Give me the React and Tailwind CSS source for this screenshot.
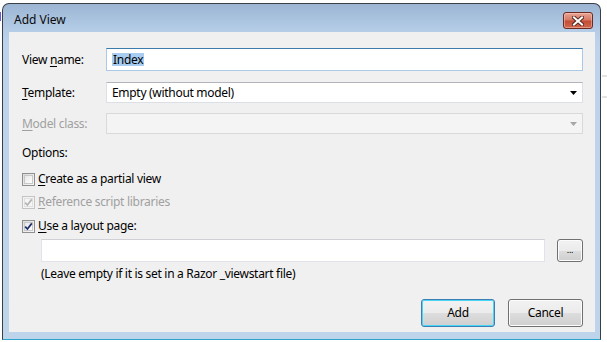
export default function App() {
  return (
    <div className="relative w-[607px] h-[342px] overflow-hidden bg-white font-['Noto_Sans',sans-serif] text-[12px] tracking-[-0.3px] text-black">
      {/* background bits outside the dialog */}
      <div className="absolute left-0 top-[12px] w-[1px] h-[9px] bg-[#6a5acd]" />
      <div className="absolute left-[602px] top-[75px] w-[5px] h-[2px] bg-[#e3e3e3]" />
      <div className="absolute left-[602px] top-[96px] w-[5px] h-[2px] bg-[#e3e3e3]" />

      {/* Window */}
      <div className="ml-[2px] mt-[3px] w-[599px] h-[337px] flex flex-col rounded-t-[7px] border border-[#3a3f47] border-b-[#2ea3cc] bg-[linear-gradient(to_bottom,#9bb5d3_0px,#b4cce6_26px,#bcd3eb_40px,#bdd4eb_100%)]">
        {/* Title bar */}
        <div className="h-[28px] shrink-0 flex items-start justify-between pl-[11px] pr-[7px] pt-[8px]">
          <span className="leading-[16px] text-[#0a0a0a] tracking-normal">Add View</span>
          <button className="w-[30px] h-[17px] flex items-center justify-center rounded-[3px] border border-[#6b2b22] bg-[linear-gradient(to_bottom,#e8a594_0%,#d77a64_45%,#c34d36_55%,#d0694d_100%)] shadow-[inset_0_0_0_1px_rgba(255,210,200,0.45)]">
            <svg width="12" height="10" viewBox="0 0 12 10">
              <path d="M2 1.5 L10 8.5 M10 1.5 L2 8.5" stroke="#5a2a22" strokeWidth="4" strokeLinecap="square" />
              <path d="M2 1.5 L10 8.5 M10 1.5 L2 8.5" stroke="#ffffff" strokeWidth="2" strokeLinecap="square" />
            </svg>
          </button>
        </div>

        {/* Client area */}
        <div className="ml-[6px] mr-[5px] h-[300px] shrink-0 bg-[#f0f0f0] flex flex-col pl-[13px] pr-[12px]">
          {/* View name */}
          <div className="mt-[16px] h-[23px] flex items-center">
            <span className="w-[84px] shrink-0">
              View <span className="underline underline-offset-2">n</span>ame:
            </span>
            <div className="flex-1 h-[23px] bg-white border border-[#a9c9e6] border-t-[#3d7bad] flex items-center pl-[5px]">
              <span className="bg-[#a8cdf1] leading-[13px] h-[13px] px-[1px]">Index</span>
            </div>
          </div>

          {/* Template */}
          <div className="mt-[11px] h-[21px] flex items-center">
            <span className="w-[84px] shrink-0">
              <span className="underline underline-offset-2">T</span>emplate:
            </span>
            <div className="flex-1 h-[21px] bg-white border border-[#dcdfe6] border-t-[#b2b5bb] flex items-center justify-between pl-[5px] pr-[5px]">
              <span>Empty (without model)</span>
              <svg width="7" height="4" viewBox="0 0 7 4">
                <path d="M0 0 H7 L3.5 4 Z" fill="#000" />
              </svg>
            </div>
          </div>

          {/* Model class */}
          <div className="mt-[10px] h-[21px] flex items-center">
            <span className="w-[84px] shrink-0 text-[#a0a0a0]">
              <span className="underline underline-offset-2">M</span>odel class:
            </span>
            <div className="flex-1 h-[21px] bg-[#f4f4f4] border border-[#d9d9d9] flex items-center justify-end pr-[5px]">
              <svg width="7" height="4" viewBox="0 0 7 4">
                <path d="M0 0 H7 L3.5 4 Z" fill="#a6a6a6" />
              </svg>
            </div>
          </div>

          {/* Options */}
          <div className="mt-[11px] h-[16px] flex items-center">Options:</div>

          <CheckRow className="mt-[10px]" label={<><span className="underline underline-offset-2">C</span>reate as a partial view</>} />
          <CheckRow className="mt-[7px]" checked disabled label={<><span className="underline underline-offset-2">R</span>eference script libraries</>} />
          <CheckRow className="mt-[8px]" checked label={<><span className="underline underline-offset-2">U</span>se a layout page:</>} />

          {/* Layout page path */}
          <div className="mt-[5px] h-[23px] flex items-center pl-[19px] gap-[12px]">
            <div className="flex-1 h-[23px] bg-white border border-[#e2e3ea] border-t-[#cfd1d7]" />
            <WinButton className="w-[26px] h-[23px]">
              <span className="text-[9px] leading-none pb-[2px]">...</span>
            </WinButton>
          </div>

          <div className="mt-[4px] h-[16px] flex items-center pl-[19px]">
            (Leave empty if it is set in a Razor _viewstart file)
          </div>

          {/* Buttons */}
          <div className="mt-[17px] h-[28px] flex justify-end gap-[13px]">
            <WinButton focused className="w-[74px] h-[28px]">Add</WinButton>
            <WinButton className="w-[75px] h-[28px]">Cancel</WinButton>
          </div>
        </div>
      </div>
    </div>
  );
}

function CheckRow({ checked, disabled, label, className }) {
  return (
    <div className={`h-[16px] flex items-center gap-[3px] ${className}`}>
      <span
        className={
          disabled
            ? 'w-[13px] h-[13px] shrink-0 border border-[#c4c4c4] bg-[#f4f4f4] flex items-center justify-center'
            : 'w-[13px] h-[13px] shrink-0 border border-[#8e8f8f] bg-[linear-gradient(135deg,#dcdcdc,#f8f8f8)] flex items-center justify-center'
        }
      >
        <span
          className={
            disabled
              ? 'w-[9px] h-[9px] border border-[#e0e0e0] bg-[#f6f6f6] flex items-center justify-center'
              : 'w-[9px] h-[9px] border border-[#c8c8c8] bg-[linear-gradient(135deg,#e6e6e6,#ffffff)] flex items-center justify-center'
          }
        >
          {checked && (
            <svg width="9" height="9" viewBox="0 0 9 9" className="-m-[1px]">
              <path
                d="M1.2 4.6 L3.4 7 L7.8 1.4"
                fill="none"
                stroke={disabled ? '#b4b4b4' : '#1c2b6b'}
                strokeWidth="1.7"
              />
            </svg>
          )}
        </span>
      </span>
      <span className={disabled ? 'text-[#a0a0a0]' : ''}>{label}</span>
    </div>
  );
}

function WinButton({ focused, className, children }) {
  return (
    <button
      className={
        focused
          ? `flex items-center justify-center rounded-[3px] border border-[#3c7fb1] bg-[linear-gradient(to_bottom,#f2f2f2_0%,#ebebeb_50%,#dddddd_50%,#cfcfcf_100%)] shadow-[inset_0_0_0_1px_#48d6f8] text-[12px] text-black ${className}`
          : `flex items-center justify-center rounded-[3px] border border-[#707070] bg-[linear-gradient(to_bottom,#f2f2f2_0%,#ebebeb_50%,#dddddd_50%,#cfcfcf_100%)] shadow-[inset_0_0_0_1px_#fcfcfc] text-[12px] text-black ${className}`
      }
    >
      {children}
    </button>
  );
}
